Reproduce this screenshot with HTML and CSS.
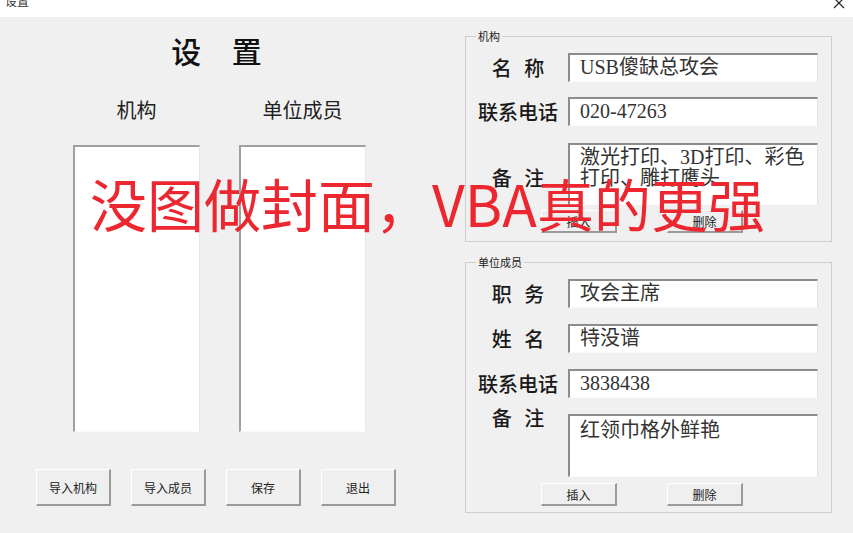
FILE: index.html
```html
<!DOCTYPE html>
<html lang="zh-CN">
<head>
    <meta charset="UTF-8">
    <title>设置</title>
    <link rel="stylesheet" href="styles.css">
</head>
<body>
    <div class="window">
        <div class="title-bar">
            <span class="title-text">设置</span>
            <svg class="close-icon" width="12" height="12" viewBox="0 0 12 12">
                <path d="M1 1 L11 11 M11 1 L1 11" stroke="#222" stroke-width="1.2" fill="none"/>
            </svg>
        </div>

        <div class="form-body">
            <div class="left-panel">
                <h1 class="main-title">设 置</h1>

                <div class="lists">
                    <div class="list-col">
                        <div class="list-label">机构</div>
                        <div class="list-box"></div>
                    </div>
                    <div class="list-col">
                        <div class="list-label">单位成员</div>
                        <div class="list-box"></div>
                    </div>
                </div>

                <div class="main-buttons">
                    <button type="button" class="win-button big">导入机构</button>
                    <button type="button" class="win-button big">导入成员</button>
                    <button type="button" class="win-button big">保存</button>
                    <button type="button" class="win-button big">退出</button>
                </div>
            </div>

            <div class="right-panel">
                <fieldset class="group org-group">
                    <legend>机构</legend>
                    <div class="group-grid">
                        <label class="field-label">名 称</label>
                        <div class="text-box">USB傻缺总攻会</div>

                        <label class="field-label">联系电话</label>
                        <div class="text-box">020-47263</div>

                        <label class="field-label note-label">备 注</label>
                        <div class="text-box memo">激光打印、3D打印、彩色打印、雕打鹰头</div>

                        <div class="group-buttons">
                            <button type="button" class="win-button small">插入</button>
                            <button type="button" class="win-button small">删除</button>
                        </div>
                    </div>
                </fieldset>

                <fieldset class="group member-group">
                    <legend>单位成员</legend>
                    <div class="group-grid">
                        <label class="field-label">职 务</label>
                        <div class="text-box">攻会主席</div>

                        <label class="field-label">姓 名</label>
                        <div class="text-box">特没谱</div>

                        <label class="field-label">联系电话</label>
                        <div class="text-box">3838438</div>

                        <label class="field-label note-label">备 注</label>
                        <div class="text-box memo">红领巾格外鲜艳</div>

                        <div class="group-buttons">
                            <button type="button" class="win-button small">插入</button>
                            <button type="button" class="win-button small">删除</button>
                        </div>
                    </div>
                </fieldset>
            </div>
        </div>

        <!-- 视频封面上的大字 -->
        <div class="cover-text">没图做封面，VBA真的更强</div>
    </div>
</body>
</html>
```

FILE: styles.css
```css
body {
    margin: 0;
    font-family: "Noto Sans CJK SC", "Noto Sans", sans-serif;
    background-color: #f0f0f0;
    color: #1a1a1a;
}

.window {
    position: relative;
    width: 853px;
    height: 533px;
    overflow: hidden;
}

.title-bar {
    height: 17px;
    background-color: #fff;
    display: flex;
    justify-content: space-between;
    overflow: hidden;
}

.title-text {
    font-size: 12px;
    line-height: 12px;
    margin-top: -5px;
    margin-left: 5px;
    color: #333;
}

.close-icon {
    margin-top: -3px;
    margin-right: 8px;
}

.form-body {
    display: flex;
}

/* left side */
.left-panel {
    width: 433px;
    display: flex;
    flex-direction: column;
}

.main-title {
    margin: 18px 0 0 0;
    font-size: 30px;
    line-height: 30px;
    font-weight: 500;
    text-align: center;
    word-spacing: 24px;
    color: #111;
}

.lists {
    display: flex;
    gap: 39px;
    margin-top: 35px;
    margin-left: 73px;
}

.list-col {
    width: 127px;
    display: flex;
    flex-direction: column;
    align-items: center;
}

.list-label {
    font-size: 20px;
    line-height: 20px;
    color: #222;
}

.list-box {
    margin-top: 25px;
    width: 127px;
    height: 287px;
    box-sizing: border-box;
    background-color: #fff;
    border-top: 2px solid #a0a0a0;
    border-left: 2px solid #a0a0a0;
    border-right: 1px solid #e6e6e6;
    border-bottom: 1px solid #fafafa;
}

.main-buttons {
    display: flex;
    gap: 20px;
    margin-top: 37px;
    margin-left: 36px;
}

.win-button {
    font-family: "Noto Sans CJK SC", sans-serif;
    font-size: 12px;
    color: #222;
    background-color: #efefef;
    box-sizing: border-box;
    padding: 0;
    border-top: 1px solid #fff;
    border-left: 1px solid #fff;
    border-right: 2px solid #9a9a9a;
    border-bottom: 2px solid #9a9a9a;
    border-radius: 0;
}

.win-button.big {
    width: 75px;
    height: 37px;
}

.win-button.small {
    width: 76px;
    height: 23px;
}

/* right side */
.right-panel {
    display: flex;
    flex-direction: column;
    margin-left: 32px;
}

.group {
    margin: 0;
    padding: 0;
    width: 367px;
    box-sizing: border-box;
    border: 1px solid #cdcdcd;
}

.group legend {
    margin-left: 10px;
    padding: 0 2px;
    font-size: 11px;
    line-height: 12px;
    color: #222;
}

.org-group {
    margin-top: 13px;
}

.member-group {
    margin-top: 14px;
}

.group-grid {
    display: grid;
    grid-template-columns: 80px 250px;
    column-gap: 10px;
    padding-left: 12px;
}

.org-group .group-grid {
    padding-top: 11px;
    padding-bottom: 8px;
    row-gap: 15px;
}

.member-group .group-grid {
    padding-top: 11px;
    padding-bottom: 6px;
    row-gap: 16px;
}

.field-label {
    align-self: center;
    text-align: center;
    font-size: 20px;
    line-height: 20px;
    font-weight: 500;
    color: #1a1a1a;
    word-spacing: 8px;
    white-space: nowrap;
}

.text-box {
    height: 29px;
    box-sizing: border-box;
    background-color: #fff;
    border-top: 2px solid #8c8c8c;
    border-left: 2px solid #8c8c8c;
    border-right: 1px solid #e3e3e3;
    border-bottom: 1px solid #fafafa;
    padding: 1px 0 0 10px;
    font-family: "Liberation Serif", "Noto Sans CJK SC", serif;
    font-size: 20px;
    line-height: 22px;
    color: #333;
}

.text-box.memo {
    line-height: 21px;
    padding-top: 2px;
    padding-right: 10px;
    overflow: hidden;
}

.org-group .text-box.memo {
    height: 62px;
    margin-top: 2px;
}

.member-group .text-box.memo {
    height: 63px;
    padding-top: 4px;
}

.org-group .note-label {
    align-self: start;
    margin-top: 27px;
}

.member-group .note-label {
    align-self: start;
    margin-top: -6px;
}

.group-buttons {
    grid-column: 1 / -1;
    display: flex;
    gap: 50px;
    padding-left: 63px;
}

.org-group .group-buttons {
    margin-top: -10px;
}

.member-group .group-buttons {
    margin-top: -10px;
}

/* red caption on top of everything */
.cover-text {
    position: absolute;
    left: 90px;
    top: 174px;
    font-family: "Noto Sans CJK SC", "Noto Sans", sans-serif;
    font-size: 57px;
    line-height: 57px;
    color: #ec2730;
    white-space: nowrap;
}
```
